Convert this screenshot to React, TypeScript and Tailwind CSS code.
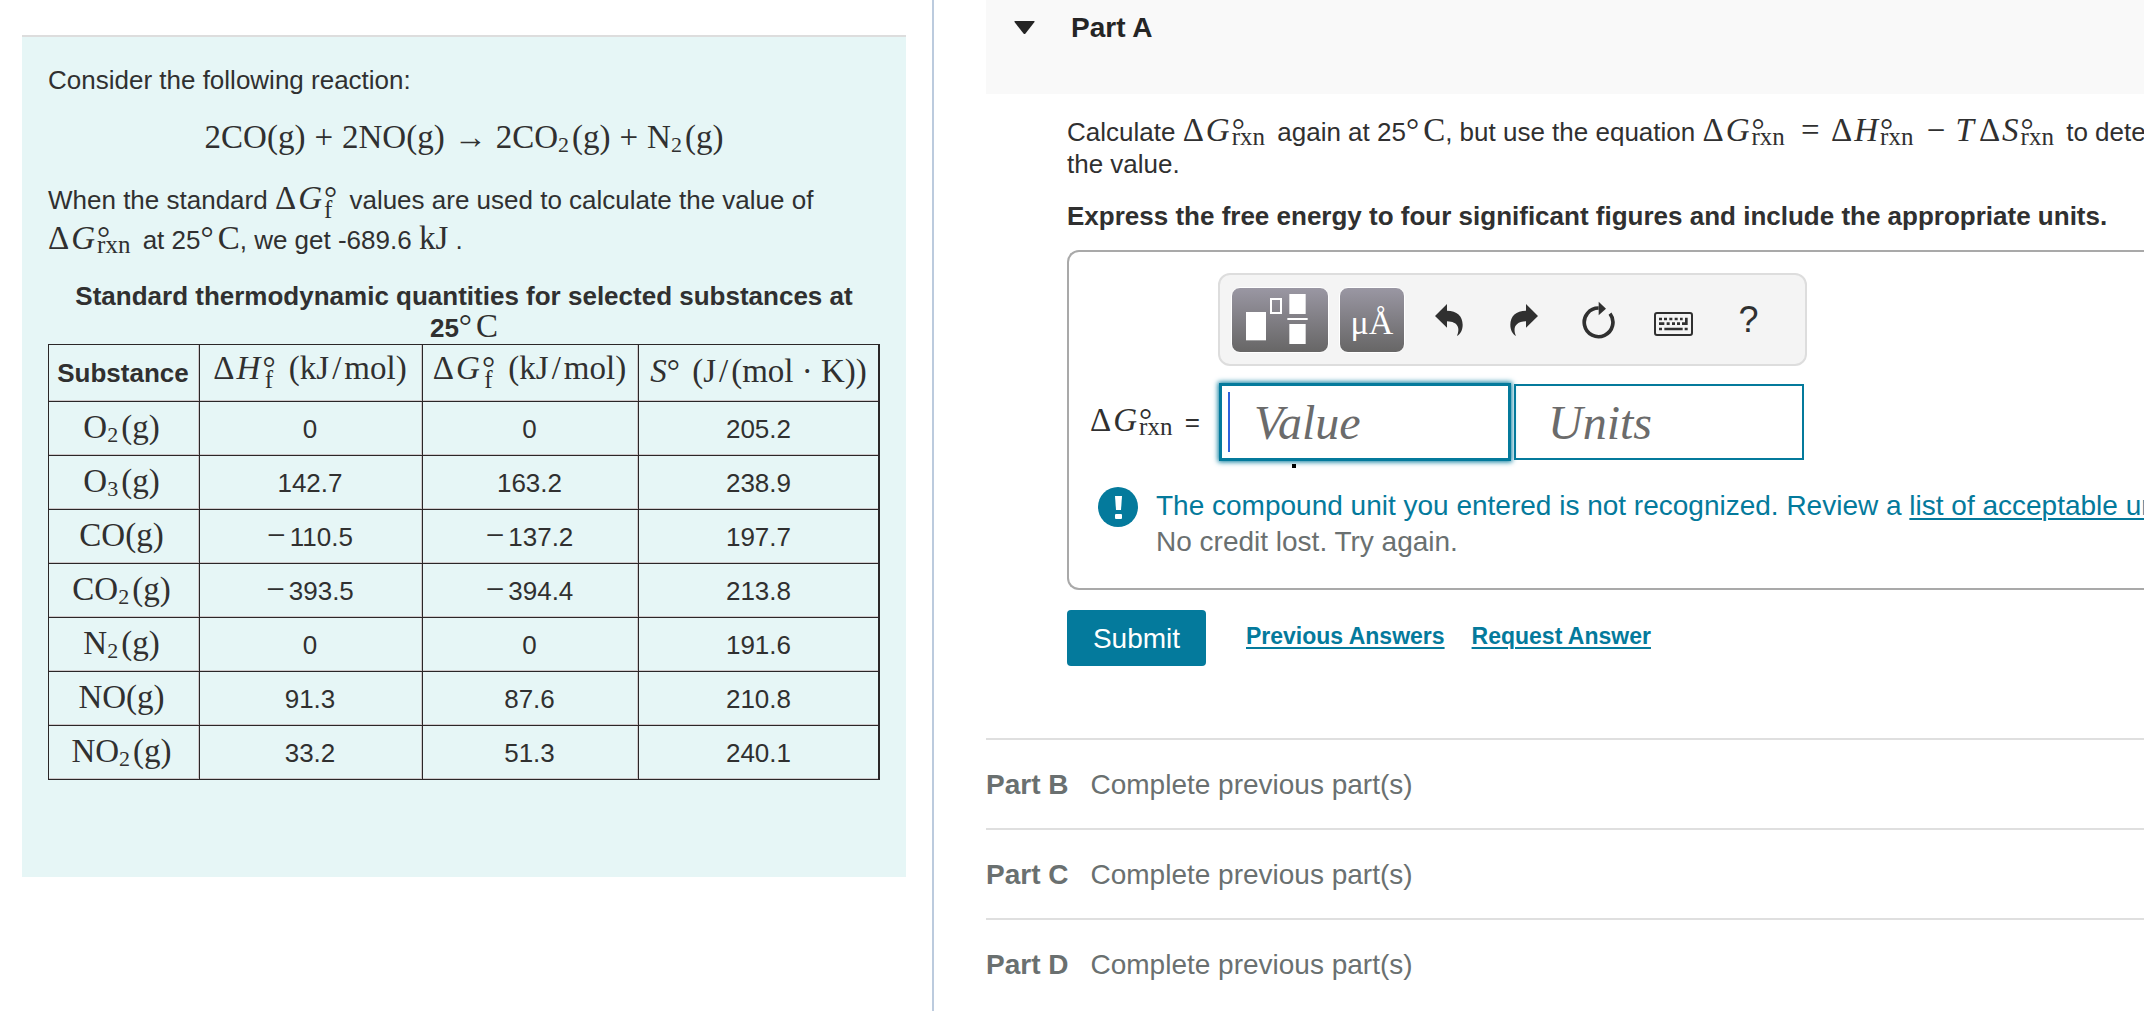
import React from 'react'

type Row = { formula: React.ReactNode; h: string; g: string; s: string }

const Sub = ({ children }: { children: React.ReactNode }) => (
  <span className="align-[-4px] text-[22px] leading-[0] mr-[3px]">{children}</span>
)

const Math = ({ children }: { children: React.ReactNode }) => (
  <span className="font-['Liberation_Serif',serif] text-[33px] leading-[0] font-normal whitespace-nowrap">{children}</span>
)

// thermodynamic symbol: delta, italic letter, degree sign stacked on its subscript
const Quantity = ({ letter, sub }: { letter: string; sub: 'rxn' | 'f' }) => (
  <span className="mr-[5px]">
    <span className="mr-[2px]">Δ</span><i className="mr-[2px]">{letter}</i>
    <span className="inline-flex flex-col">
      <span className="leading-[0]">°</span>
      {sub === 'rxn'
        ? <span className="text-[25px] leading-[14px]">rxn</span>
        : <span className="text-[25px] leading-[24px]">f</span>}
    </span>
  </span>
)

const Celsius = () => (
  <Math><span className="mr-[4px]">°</span>C</Math>
)

const Slash = () => <span className="mx-[3px]">/</span>

const Op = ({ children }: { children: string }) => (
  <Math><span className="mx-[9px]">{children}</span></Math>
)

const Value = ({ children }: { children: string }) => (
  children.startsWith('-')
    ? <><Math><span className="mr-1">−</span></Math>{children.slice(1)}</>
    : <>{children}</>
)

const rows: Row[] = [
  { formula: <>O<Sub>2</Sub>(g)</>, h: '0', g: '0', s: '205.2' },
  { formula: <>O<Sub>3</Sub>(g)</>, h: '142.7', g: '163.2', s: '238.9' },
  { formula: <>CO(g)</>, h: '-110.5', g: '-137.2', s: '197.7' },
  { formula: <>CO<Sub>2</Sub>(g)</>, h: '-393.5', g: '-394.4', s: '213.8' },
  { formula: <>N<Sub>2</Sub>(g)</>, h: '0', g: '0', s: '191.6' },
  { formula: <>NO(g)</>, h: '91.3', g: '87.6', s: '210.8' },
  { formula: <>NO<Sub>2</Sub>(g)</>, h: '33.2', g: '51.3', s: '240.1' },
]

const cell = "border-r border-b border-[#2b2728] shadow-[inset_-1px_-1px_0_#cdc9ca] py-0 pl-0 pr-[2px] text-center align-middle whitespace-nowrap"
const lastCell = "border-r-2 border-b border-[#2b2728] shadow-[inset_0_-1px_0_#cdc9ca] p-0 text-center align-middle whitespace-nowrap"

const UndoIcon = () => (
  <svg viewBox="0 0 84 96" className="w-[28px] h-[32px]" fill="currentColor">
    <path d="M0 36 36 0V20C66 20 83 36 83 62C83 78 76 90 66 96C76 74 70 53 36 52V71Z" />
  </svg>
)

const RedoIcon = () => (
  <svg viewBox="0 0 84 96" className="w-[28px] h-[32px]" fill="currentColor">
    <path d="M84 36 48 0V20C18 20 1 36 1 62C1 78 8 90 18 96C8 74 14 53 48 52V71Z" />
  </svg>
)

const ResetIcon = () => (
  <svg viewBox="0 0 102 114" className="w-[34px] h-[38px]">
    <path d="M50 21A43 43 0 1 0 84 38" fill="none" stroke="currentColor" strokeWidth="11" />
    <path d="M50 2 72 23 50 43Z" fill="currentColor" />
  </svg>
)

const KeyboardIcon = () => (
  <svg viewBox="0 0 117 72" className="w-[39px] h-[24px]" fill="currentColor">
    <rect x="3" y="3" width="111" height="66" rx="6" fill="none" stroke="currentColor" strokeWidth="6" />
    <path d="M15 17h9v8h-9zM30 17h9v8h-9zM46 17h9v8h-9zM62 17h9v8h-9zM78 17h8v8h-8z" />
    <path d="M15 31h16v8h-16zM38 31h9v8h-9zM54 31h9v8h-9zM69 31h9v8h-9zM93 17h8v22h-17v-8h9z" />
    <path d="M15 47h9v8h-9zM31 47h55v8h-55zM92 47h9v8h-9z" />
  </svg>
)

const TemplateIcon = () => (
  <svg viewBox="0 0 288 192" className="w-[96px] h-[64px]" fill="white">
    <rect x="42" y="72" width="60" height="85" />
    <rect x="117" y="33" width="30" height="42" fill="none" stroke="white" strokeWidth="6" />
    <rect x="172" y="18" width="49" height="60" />
    <rect x="166" y="90" width="61" height="6" />
    <rect x="172" y="108" width="49" height="60" />
  </svg>
)

const AlertIcon = () => (
  <svg viewBox="0 0 40 40" className="w-10 h-10 shrink-0">
    <circle cx="20" cy="20" r="20" fill="#047a9c" />
    <path d="M17 9h7l-1 14h-5z" fill="white" />
    <rect x="17" y="27" width="7" height="5" rx="1" fill="white" />
  </svg>
)

const toolButton = "flex justify-center items-center w-[75px] h-[66px] text-[#303030]"

const App = () => {
  return (
    <div className="grid grid-cols-[934fr_1219fr] min-h-screen bg-white font-['Liberation_Sans',Arial,sans-serif] text-[26px] leading-[32px] text-[#303030]">

      <aside className="border-r-2 border-[#bccbde] pl-[22px] pr-[26px] pt-[35px] min-w-0">
        <section className="bg-[#e6f6f6] border-t-2 border-[#dddddd] px-[26px] pt-[27px] pb-[97px]">
          <p>Consider the following reaction:</p>

          <p className="mt-[22px] text-center leading-[42px]">
            <Math>2CO(g)</Math><Op>+</Op><Math>2NO(g)</Math><Op>→</Op><Math>2CO<Sub>2</Sub>(g)</Math><Op>+</Op><Math>N<Sub>2</Sub>(g)</Math>
          </p>

          <p className="mt-[22px] leading-[36px]">
            When the standard <Math><Quantity letter="G" sub="f" /></Math> values are used to calculate the value of <Math><Quantity letter="G" sub="rxn" /></Math> at 25<Celsius />, we get -689.6 <Math>kJ</Math> .
          </p>

          <table className="w-full mt-[22px] table-fixed border-separate border-spacing-0">
            <caption className="font-bold px-5">
              Standard thermodynamic quantities for selected substances at 25<Celsius />
            </caption>
            <colgroup>
              <col className="w-[152px]" />
              <col className="w-[223px]" />
              <col className="w-[216px]" />
              <col />
            </colgroup>
            <thead>
              <tr className="h-[58px]">
                <th scope="col" className={`${cell} border-t border-l`}>Substance</th>
                <th scope="col" className={`${cell} border-t`}><Math><Quantity letter="H" sub="f" /> (kJ<Slash />mol)</Math></th>
                <th scope="col" className={`${cell} border-t`}><Math><Quantity letter="G" sub="f" /> (kJ<Slash />mol)</Math></th>
                <th scope="col" className={`${lastCell} border-t`}><Math><i>S</i><span className="mr-[4px]">°</span> (J<Slash />(mol · K))</Math></th>
              </tr>
            </thead>
            <tbody>
              {rows.map((row, i) => (
                <tr key={i} className="h-[54px]">
                  <th scope="row" className={`${cell} border-l`}><Math><span className="mr-[3px]">{row.formula}</span></Math></th>
                  <td className={cell}><Value>{row.h}</Value></td>
                  <td className={cell}><Value>{row.g}</Value></td>
                  <td className={lastCell}><Value>{row.s}</Value></td>
                </tr>
              ))}
            </tbody>
          </table>
        </section>
      </aside>

      <main className="min-w-0 pl-[52px] pr-[9px]">
        <div className="overflow-hidden">
          <h2 className="flex items-start h-[94px] bg-[#f9f9f9] pl-7 pt-3 text-[28px] font-bold text-[#252525]">
            <button type="button" aria-label="Collapse Part A" className="mt-[9px] mr-9">
              <svg viewBox="0 0 21 13" className="w-[21px] h-[13px]" fill="currentColor">
                <path d="M1 0H20Q21 0 20.500 1L11.500 12.500Q10.500 13.500 9.500 12.500L.5 1Q0 0 1 0Z" />
              </svg>
            </button>
            Part A
          </h2>

          <div className="pl-[81px] pt-[22px] whitespace-nowrap">
            <p>
              Calculate <Math><Quantity letter="G" sub="rxn" /></Math> again at 25<Celsius />, but use the equation <Math><Quantity letter="G" sub="rxn" /> <span className="mx-[3px]">=</span> <Quantity letter="H" sub="rxn" /> <span className="mr-[2px]">−</span> <i className="mr-[5px]">T</i><Quantity letter="S" sub="rxn" /></Math> to determine<br />
              the value.
            </p>
            <p className="mt-5 font-bold">Express the free energy to four significant figures and include the appropriate units.</p>

            <div className="mt-[18px] border-2 border-r-0 border-[#a9a9a9] rounded-l-xl pt-[21px] pb-[28px]">
              <div className="flex items-center w-fit ml-[149px] h-[93px] pl-[11px] pr-[19px] border-2 border-[#dddddd] rounded-xl bg-[#f4f4f4]">
                <button type="button" aria-label="Templates" className="w-[98px] h-[66px] border border-white rounded-[9px] bg-linear-to-b from-[#9a97a3] to-[#676666]"><TemplateIcon /></button>
                <button type="button" aria-label="Symbols" className="w-[66px] h-[66px] ml-[10px] pt-[6px] border border-white rounded-[9px] bg-linear-to-b from-[#9a97a3] to-[#676666] text-white font-['Liberation_Serif',serif] text-[34px]">μÅ</button>
                <button type="button" aria-label="Undo" className={`${toolButton} ml-[6px]`}><UndoIcon /></button>
                <button type="button" aria-label="Redo" className={toolButton}><RedoIcon /></button>
                <button type="button" aria-label="Reset" className={toolButton}><ResetIcon /></button>
                <button type="button" aria-label="Keyboard shortcuts" className={`${toolButton} pt-2`}><KeyboardIcon /></button>
                <button type="button" aria-label="Help" className={`${toolButton} text-[36px]`}>?</button>
              </div>

              <div className="flex items-center mt-[18px]">
                <label htmlFor="value" className="w-[151px] pl-[21px]"><Math><Quantity letter="G" sub="rxn" /></Math> =</label>
                <div className="relative">
                  <input id="value" type="text" placeholder="Value" className="block w-[290px] h-[76px] pl-8 border-2 border-[#047a9c] shadow-[0_0_0_1px_#047a9c,0_0_5px_2px_#047a9c] outline-none font-['Liberation_Serif',serif] italic text-[48px] placeholder:text-[#6b6b6b] placeholder:opacity-100" />
                  <span className="absolute left-2 top-2 w-[2px] h-[60px] bg-[#2f62dc]"></span>
                  <span className="absolute left-[72px] top-20 w-1 h-1 bg-black"></span>
                </div>
                <input aria-label="Units" type="text" placeholder="Units" className="block w-[290px] h-[76px] ml-1 pl-8 border-2 border-[#047a9c] outline-none font-['Liberation_Serif',serif] italic text-[48px] placeholder:text-[#6b6b6b] placeholder:opacity-100" />
              </div>

              <div className="flex mt-[27px] pl-[29px] gap-[18px] text-[28px] leading-[36px]">
                <AlertIcon />
                <div className="pt-px text-[#6a7070]">
                  <p className="text-[#047a9c]">The compound unit you entered is not recognized. Review a <a href="#units" className="underline decoration-2 underline-offset-[3px]">list of acceptable units</a>.</p>
                  <p>No credit lost. Try again.</p>
                </div>
              </div>
            </div>

            <div className="flex items-center mt-5">
              <button type="button" className="w-[139px] h-[56px] pt-[2px] rounded-[4px] bg-[#047a9c] text-white text-[28px]">Submit</button>
              <nav className="flex gap-[27px] ml-10 pb-1 text-[23px] font-bold text-[#047a9c]">
                <a href="#previous" className="underline decoration-2 underline-offset-[3px]">Previous Answers</a>
                <a href="#request" className="underline decoration-2 underline-offset-[3px]">Request Answer</a>
              </nav>
            </div>
          </div>

          <div className="mt-[72px] text-[28px] text-[#6a7070]">
            {['B', 'C', 'D'].map((part) => (
              <div key={part} className="flex items-center gap-[22px] h-[90px] pt-[2px] border-t-2 border-[#dfdfdf]">
                <h3 className="font-bold">Part {part}</h3>
                <p>Complete previous part(s)</p>
              </div>
            ))}
          </div>
        </div>
      </main>
    </div>
  )
}

export default App
